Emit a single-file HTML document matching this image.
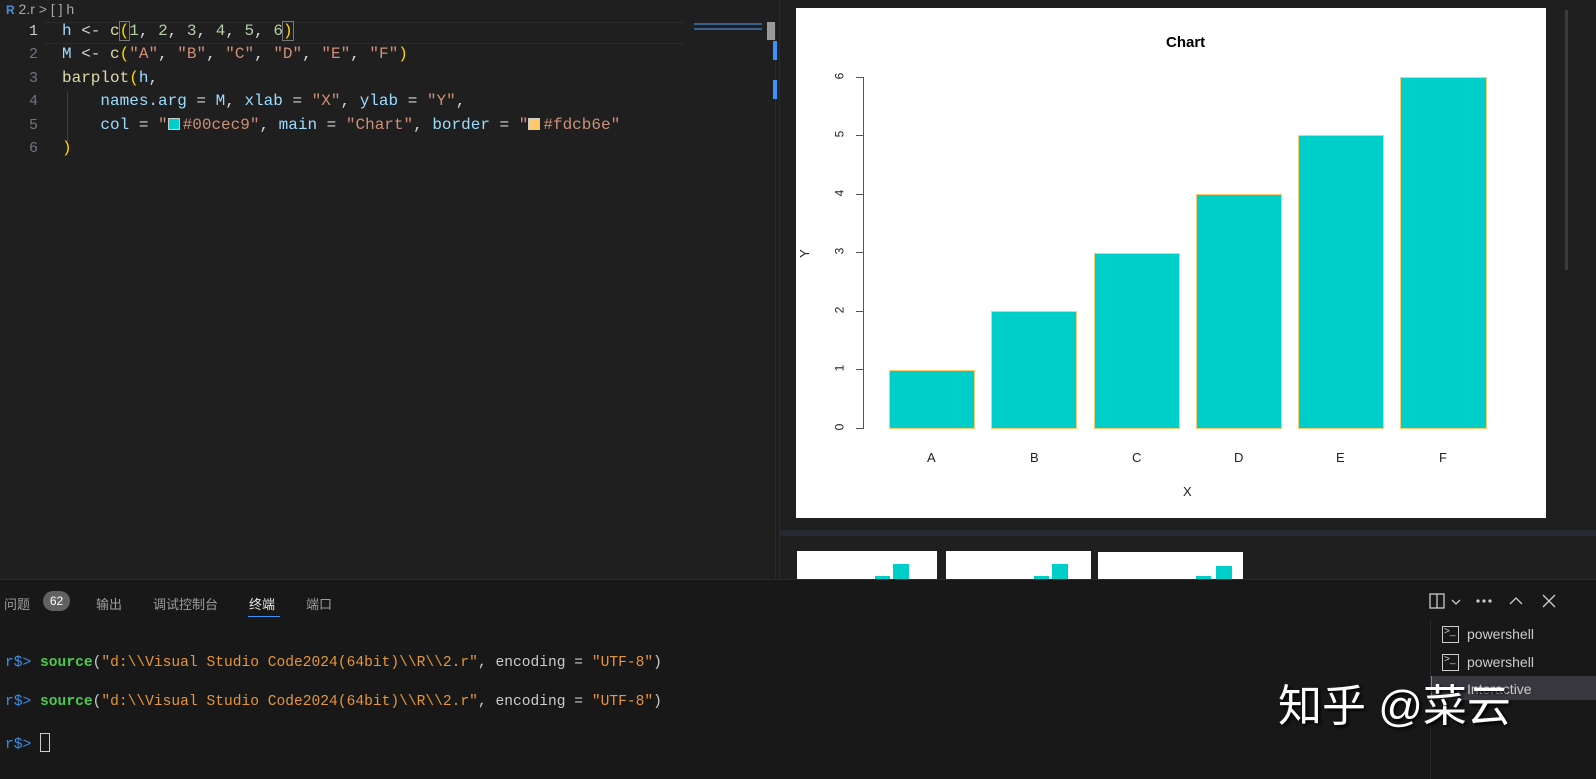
<!DOCTYPE html>
<html><head><meta charset="utf-8"><style>
*{margin:0;padding:0;box-sizing:border-box}
body{width:1596px;height:779px;background:#1f1f1f;position:relative;overflow:hidden;font-family:"Liberation Sans","Noto Sans CJK SC",sans-serif}
.mono{font-family:"Liberation Mono",monospace}
.a{position:absolute;white-space:pre}
.ln{position:absolute;left:0;width:38px;text-align:right;color:#6e7681;font:15px "Liberation Mono",monospace}
.code{position:absolute;left:62px;font:16px "Liberation Mono",monospace;color:#9cdcfe;white-space:pre}
.s{color:#ce9178}.y{color:#ffd700}.w{color:#d4d4d4}.f{color:#dcdcaa}.n{color:#b5cea8}
.sw{display:inline-block;width:12px;height:12px;border:1px solid #ccc;vertical-align:-1px;margin-right:3px}
.term{position:absolute;left:5px;font:14.6px "Liberation Mono",monospace;color:#cccccc;white-space:pre}
.term .p{color:#3b8eea}.term .g{color:#4ec94e;font-weight:bold}.term .o{color:#e5953b}
.tab{position:absolute;top:594px;font-size:13px;color:#9d9d9d}
.bar{position:absolute;background:#00cec9;border:1px solid #fdcb6e}
.yt{position:absolute;font-size:12px;color:#222;transform:rotate(-90deg)}
.xt{position:absolute;font-size:13px;color:#222}
</style></head><body>
<!-- editor -->
<div class="a" style="left:6px;top:1px;font-size:14px;color:#a9a9a9"><span style="color:#4a8fd8;font-weight:bold;font-size:12px">R</span> 2.r &gt; [ ] h</div>
<div class="a" style="left:44px;top:22px;width:640px;height:22px;border-top:1px solid #2a2a2a;border-bottom:1px solid #2a2a2a"></div>
<div class="ln" style="top:23px;color:#ccc">1</div>
<div class="ln" style="top:46px">2</div>
<div class="ln" style="top:70px">3</div>
<div class="ln" style="top:93px">4</div>
<div class="ln" style="top:117px">5</div>
<div class="ln" style="top:140px">6</div>
<div class="code" style="top:22px">h <span class="w">&lt;-</span> <span class="f">c</span><span class="y" style="outline:1px solid #777">(</span><span class="n">1</span><span class="w">,</span> <span class="n">2</span><span class="w">,</span> <span class="n">3</span><span class="w">,</span> <span class="n">4</span><span class="w">,</span> <span class="n">5</span><span class="w">,</span> <span class="n">6</span><span class="y" style="outline:1px solid #777">)</span></div>
<div class="code" style="top:45px">M <span class="w">&lt;-</span> <span class="f">c</span><span class="y">(</span><span class="s">"A"</span><span class="w">,</span> <span class="s">"B"</span><span class="w">,</span> <span class="s">"C"</span><span class="w">,</span> <span class="s">"D"</span><span class="w">,</span> <span class="s">"E"</span><span class="w">,</span> <span class="s">"F"</span><span class="y">)</span></div>
<div class="code" style="top:69px"><span class="f">barplot</span><span class="y">(</span>h<span class="w">,</span></div>
<div class="code" style="top:92px">    names.arg <span class="w">=</span> M<span class="w">,</span> xlab <span class="w">=</span> <span class="s">"X"</span><span class="w">,</span> ylab <span class="w">=</span> <span class="s">"Y"</span><span class="w">,</span></div>
<div class="code" style="top:116px">    col <span class="w">=</span> <span class="s">"<span class="sw" style="background:#00cec9"></span>#00cec9"</span><span class="w">,</span> main <span class="w">=</span> <span class="s">"Chart"</span><span class="w">,</span> border <span class="w">=</span> <span class="s">"<span class="sw" style="background:#fdcb6e"></span>#fdcb6e"</span></div>
<div class="code" style="top:139px"><span class="y">)</span></div>
<div class="a" style="left:67px;top:92px;width:1px;height:50px;background:#404040"></div>
<!-- minimap -->
<div class="a" style="left:694px;top:23px;width:68px;height:2px;background:#3a5f8f"></div>
<div class="a" style="left:694px;top:28px;width:68px;height:2px;background:#3a5f8f"></div>
<div class="a" style="left:775px;top:23px;width:1px;height:555px;background:#2b2b2b"></div>
<div class="a" style="left:767px;top:22px;width:8px;height:18px;background:#9a9a9a"></div>
<div class="a" style="left:773px;top:41px;width:4px;height:19px;background:#3794ff"></div>
<div class="a" style="left:773px;top:80px;width:4px;height:19px;background:#3794ff"></div>
<!-- plot pane -->
<div class="a" style="left:779px;top:0;width:817px;height:579px;background:#1f1f1f"></div>
<div class="a" style="left:779px;top:0;width:1px;height:579px;background:#2b2b2b"></div>
<div class="a" style="left:1565px;top:10px;width:3px;height:260px;background:#3a3a3a"></div>
<div class="a" style="left:796px;top:8px;width:750px;height:510px;background:#fff">
 <div class="a" style="left:370px;top:26px;font-weight:bold;font-size:15px;color:#000">Chart</div>
 <div class="a" style="left:67px;top:69px;width:1px;height:352px;background:#555"></div>
 <div class="a" style="left:60px;top:69px;width:7px;height:1px;background:#555"></div>
 <div class="a" style="left:60px;top:127px;width:7px;height:1px;background:#555"></div>
 <div class="a" style="left:60px;top:186px;width:7px;height:1px;background:#555"></div>
 <div class="a" style="left:60px;top:244px;width:7px;height:1px;background:#555"></div>
 <div class="a" style="left:60px;top:303px;width:7px;height:1px;background:#555"></div>
 <div class="a" style="left:60px;top:361px;width:7px;height:1px;background:#555"></div>
 <div class="a" style="left:60px;top:420px;width:7px;height:1px;background:#555"></div>
 <div class="yt" style="left:40px;top:61px">6</div>
 <div class="yt" style="left:40px;top:119px">5</div>
 <div class="yt" style="left:40px;top:178px">4</div>
 <div class="yt" style="left:40px;top:236px">3</div>
 <div class="yt" style="left:40px;top:295px">2</div>
 <div class="yt" style="left:40px;top:353px">1</div>
 <div class="yt" style="left:40px;top:412px">0</div>
 <div class="yt" style="left:4px;top:238px;font-size:13px">Y</div>
 <div class="bar" style="left:93px;top:362px;width:86px;height:59px"></div>
 <div class="bar" style="left:195px;top:303px;width:86px;height:118px"></div>
 <div class="bar" style="left:298px;top:245px;width:86px;height:176px"></div>
 <div class="bar" style="left:400px;top:186px;width:86px;height:235px"></div>
 <div class="bar" style="left:502px;top:127px;width:86px;height:294px"></div>
 <div class="bar" style="left:604px;top:69px;width:87px;height:352px"></div>
 <div class="xt" style="left:131px;top:442px">A</div>
 <div class="xt" style="left:234px;top:442px">B</div>
 <div class="xt" style="left:336px;top:442px">C</div>
 <div class="xt" style="left:438px;top:442px">D</div>
 <div class="xt" style="left:540px;top:442px">E</div>
 <div class="xt" style="left:643px;top:442px">F</div>
 <div class="xt" style="left:387px;top:476px">X</div>
</div>
<div class="a" style="left:779px;top:530px;width:817px;height:6px;background:#262a30"></div>
<div class="a" style="left:797px;top:551px;width:140px;height:28px;background:#fff"><div class="a" style="left:96px;top:13px;width:16px;height:15px;background:#00cec9"></div><div class="a" style="left:78px;top:25px;width:15px;height:3px;background:#00cec9"></div></div>
<div class="a" style="left:946px;top:551px;width:145px;height:28px;background:#fff"><div class="a" style="left:106px;top:13px;width:16px;height:15px;background:#00cec9"></div><div class="a" style="left:88px;top:25px;width:15px;height:3px;background:#00cec9"></div></div>
<div class="a" style="left:1098px;top:552px;width:145px;height:27px;background:#fff"><div class="a" style="left:118px;top:14px;width:16px;height:13px;background:#00cec9"></div><div class="a" style="left:98px;top:24px;width:15px;height:3px;background:#00cec9"></div></div>
<!-- panel -->
<div class="a" style="left:0;top:579px;width:1596px;height:200px;background:#181818;border-top:1px solid #2b2b2b"></div>
<div class="tab" style="left:4px">问题</div>
<div class="a" style="left:43px;top:591px;width:27px;height:20px;border-radius:10px;background:#616161;color:#fff;font-size:12px;text-align:center;line-height:20px">62</div>
<div class="tab" style="left:96px">输出</div>
<div class="tab" style="left:153px">调试控制台</div>
<div class="tab" style="left:249px;color:#e7e7e7">终端</div>
<div class="a" style="left:248px;top:616px;width:32px;height:1px;background:#3794ff"></div>
<div class="tab" style="left:306px">端口</div>
<div class="term" style="top:655px"><span class="p">r$&gt;</span> <span class="g">source</span>(<span class="o">"d:\\Visual Studio Code2024(64bit)\\R\\2.r"</span>, encoding = <span class="o">"UTF-8"</span>)</div>
<div class="term" style="top:694px"><span class="p">r$&gt;</span> <span class="g">source</span>(<span class="o">"d:\\Visual Studio Code2024(64bit)\\R\\2.r"</span>, encoding = <span class="o">"UTF-8"</span>)</div>
<div class="term" style="top:733px"><span class="p">r$&gt;</span> <span style="display:inline-block;width:10px;height:19px;border:1px solid #ccc;vertical-align:-4px"></span></div>
<!-- panel toolbar -->
<svg class="a" style="left:1428px;top:591px" width="170" height="20" viewBox="0 0 170 20" fill="none" stroke="#ccc" stroke-width="1.3">
<rect x="2" y="3" width="14" height="14"/><line x1="9" y1="3" x2="9" y2="17"/>
<path d="M24 9l4 4 4-4"/>
<circle cx="50" cy="10" r="1" fill="#ccc"/><circle cx="56" cy="10" r="1" fill="#ccc"/><circle cx="62" cy="10" r="1" fill="#ccc"/>
<path d="M82 13l6-6 6 6"/>
<path d="M115 4l12 12M127 4l-12 12"/>
</svg>
<div class="a" style="left:1430px;top:620px;width:1px;height:159px;background:#2b2b2b"></div>
<div class="a" style="left:1431px;top:676px;width:165px;height:24px;background:#37373d"></div>
<div class="a" style="left:1431px;top:676px;width:1px;height:24px;background:#3794ff"></div>
<div class="a" style="left:1442px;top:626px;width:17px;height:17px;border:1px solid #ccc"></div>
<div class="a" style="left:1444px;top:626px;font-size:10px;color:#ccc">&gt;_</div>
<div class="a" style="left:1467px;top:626px;font-size:14px;color:#ccc">powershell</div>
<div class="a" style="left:1442px;top:654px;width:17px;height:17px;border:1px solid #ccc"></div>
<div class="a" style="left:1444px;top:654px;font-size:10px;color:#ccc">&gt;_</div>
<div class="a" style="left:1467px;top:654px;font-size:14px;color:#ccc">powershell</div>
<div class="a" style="left:1467px;top:681px;font-size:14px;color:#ccc">Interactive</div>
<div class="a" style="left:1278px;top:670px;font-size:44px;color:#fff;font-family:'Liberation Sans','Noto Sans CJK SC',sans-serif;text-shadow:2px 2px 3px #000">知乎 @菜云</div>
</body></html>
